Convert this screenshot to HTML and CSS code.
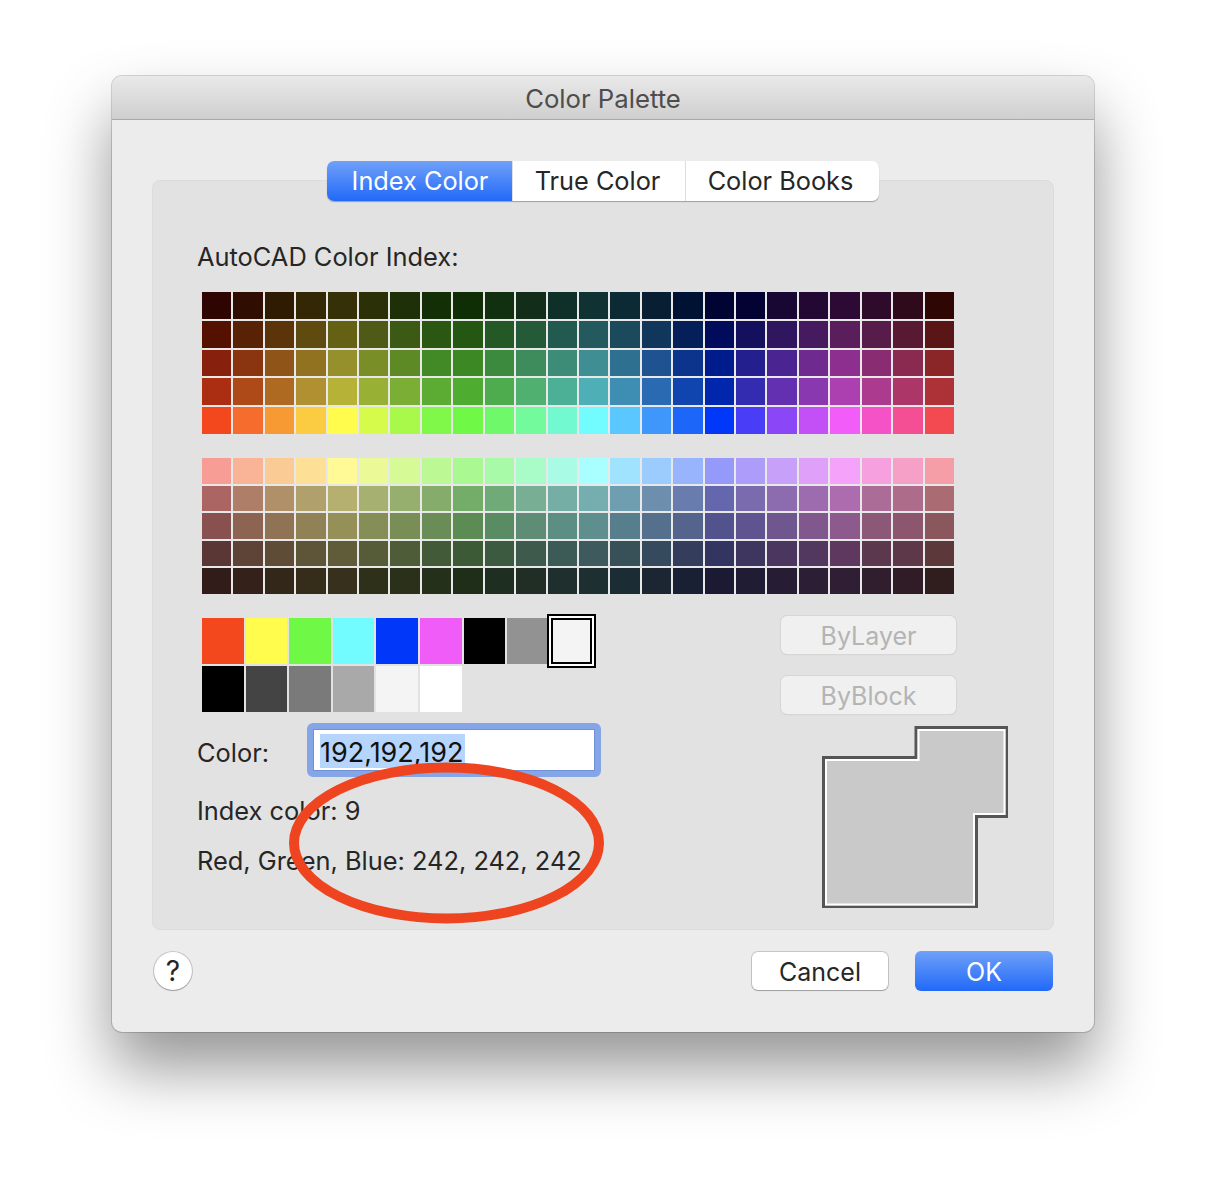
FILE: index.html
```html
<!DOCTYPE html>
<html lang="en">
  <head>
    <meta charset="UTF-8" />
    <meta name="viewport" content="width=device-width, initial-scale=1.0" />
    <title>Color Palette</title>
    <link rel="stylesheet" href="styles.css">
  </head>
  <body>
    <div class="window">
      <div class="titlebar">Color Palette</div>
      <div class="window-body">
        <div class="panel">
          <div class="tabs">
            <div class="tab active">Index Color</div>
            <div class="tab">True Color</div>
            <div class="tab">Color Books</div>
          </div>

          <div class="index-label">AutoCAD Color Index:</div>
          <div class="color-grid" id="gridBright"></div>
          <div class="color-grid pale" id="gridPale"></div>

          <div class="lower">
            <div class="lower-left">
              <div class="swatches">
                <div class="swatch sw-red"></div>
                <div class="swatch sw-yellow"></div>
                <div class="swatch sw-green"></div>
                <div class="swatch sw-cyan"></div>
                <div class="swatch sw-blue"></div>
                <div class="swatch sw-magenta"></div>
                <div class="swatch sw-black"></div>
                <div class="swatch sw-gray"></div>
                <div class="swatch sw-light selected"></div>
                <div class="swatch sw-black"></div>
                <div class="swatch sw-g1"></div>
                <div class="swatch sw-g2"></div>
                <div class="swatch sw-g3"></div>
                <div class="swatch sw-light"></div>
                <div class="swatch sw-white"></div>
              </div>
              <div class="color-row">
                <span class="color-label">Color:</span>
                <div class="color-input"><span class="selection">192,192,192</span></div>
              </div>
              <p class="info">Index color: 9</p>
              <p class="info">Red, Green, Blue: 242, 242, 242</p>
            </div>

            <div class="lower-right">
              <button class="btn-disabled" type="button">ByLayer</button>
              <button class="btn-disabled" type="button">ByBlock</button>
              <svg class="preview" width="186" height="182" viewBox="0 0 186 182">
                <path d="M1.5 181V31.500H94V1.500H185V90.500H154.500V181Z" fill="#c9c9c9" stroke="#555" stroke-width="3" />
                <path d="M4 178.500V34H96.500V4H182.500V88H152V178.500Z" fill="#c9c9c9" stroke="#fff" stroke-width="2" />
              </svg>
            </div>
          </div>
        </div>

        <div class="footer">
          <button class="btn-help" type="button">?</button>
          <div class="footer-actions">
            <button class="btn" type="button">Cancel</button>
            <button class="btn primary" type="button">OK</button>
          </div>
        </div>
      </div>

      <svg class="annotation" width="320" height="164" viewBox="0 0 320 164">
        <ellipse cx="159.500" cy="82" rx="152.500" ry="75.500" fill="none" stroke="#ee4520" stroke-width="10" />
      </svg>
    </div>

    <script src="palette.js"></script>
  </body>
</html>
```

FILE: styles.css
```css
* {
  margin: 0;
  padding: 0;
  box-sizing: border-box;
}

body {
  width: 1206px;
  height: 1180px;
  padding: 76px 112px 0 112px;
  font-family: 'Inter', 'Liberation Sans', sans-serif;
  font-size: 25.400px;
  color: #262626;
  background-color: #fff;
  overflow: hidden;
}

button {
  font-family: inherit;
  font-size: 25px;
  color: inherit;
}

.window {
  position: relative;
  height: 956px;
  border-radius: 10px;
  background-color: #ececec;
  box-shadow: 0 0 0 1px rgba(0, 0, 0, 0.16), 0 36px 64px rgba(0, 0, 0, 0.42);
}

.titlebar {
  height: 44px;
  line-height: 46px;
  font-size: 25.700px;
  text-align: center;
  color: #4d4d4d;
  background: linear-gradient(#e9e9e9, #cfcfcf);
  border-bottom: 1px solid #a9a9a9;
  border-radius: 10px 10px 0 0;
}

.window-body {
  padding: 60px 40px 0;
}

.panel {
  height: 750px;
  padding: 0 45px 0 44px;
  background-color: #e2e2e2;
  border: 1px solid #dcdcdc;
  border-radius: 8px;
}

.tabs {
  display: flex;
  width: 552px;
  height: 40px;
  margin: -20px auto 0;
  font-size: 25.300px;
  background-color: #fff;
  border-radius: 7px;
  box-shadow: 0 1px 1px rgba(0, 0, 0, 0.3);
}

.tab {
  padding-right: 2px;
  line-height: 40px;
  text-align: center;
  border-left: 1px solid #dedede;
}
.tab:nth-child(1) {
  width: 185px;
}
.tab:nth-child(2) {
  width: 173px;
}
.tab:nth-child(3) {
  width: 194px;
  padding-right: 3px;
}
.tab.active {
  padding: 0 0 0 2px;
  color: #fff;
  border-left: none;
  border-radius: 7px 0 0 7px;
  background: linear-gradient(#70a1f9, #2169f8);
}

.index-label {
  height: 30px;
  margin-top: 41px;
  line-height: 30px;
}

.color-grid {
  display: grid;
  grid-template-columns: repeat(24, 1fr);
  grid-template-rows: repeat(5, 1fr);
  gap: 2px;
  width: 752px;
  height: 142px;
  margin: 20px 0 0 5px;
  background-color: #e8e8e8;
}
.color-grid.pale {
  height: 136px;
  margin-top: 24px;
}

.lower {
  display: flex;
  justify-content: space-between;
  margin-top: 20px;
}

.lower-left {
  width: 420px;
}

.swatches {
  display: grid;
  grid-template-columns: repeat(9, 41.600px);
  grid-auto-rows: 46px;
  gap: 2px;
  margin: 4px 0 0 5px;
}

.swatch.selected {
  box-shadow: inset 0 0 0 2px #000, 0 0 0 2px #fff, 0 0 0 4px #000;
}

.sw-red { background-color: #f3481e; }
.sw-yellow { background-color: #fffc4d; }
.sw-green { background-color: #6ff846; }
.sw-cyan { background-color: #72fcff; }
.sw-blue { background-color: #0037f9; }
.sw-magenta { background-color: #f05cf8; }
.sw-black { background-color: #000; }
.sw-gray { background-color: #929292; }
.sw-light { background-color: #f4f4f4; }
.sw-g1 { background-color: #444; }
.sw-g2 { background-color: #7a7a7a; }
.sw-g3 { background-color: #a9a9a9; }
.sw-white { background-color: #fff; }

.color-row {
  display: flex;
  align-items: center;
  margin-top: 11px;
}

.color-label {
  width: 110px;
  padding-top: 5px;
}

.color-input {
  width: 294px;
  height: 54px;
  padding: 5px 0 0 7px;
  font-size: 27px;
  line-height: 38px;
  color: #111;
  background-color: #fff;
  border: 6px solid #85a6e6;
  border-radius: 6px;
  box-shadow: inset 0 0 0 1px #6f8fd8;
}

.selection {
  display: inline-block;
  height: 34px;
  padding-right: 2px;
  background-color: #b5d5fd;
}

.info {
  height: 30px;
  margin-top: 19px;
  line-height: 30px;
  white-space: nowrap;
}
.info + .info {
  padding-top: 1px;
}

.lower-right {
  display: flex;
  flex-direction: column;
  align-items: flex-start;
  width: 228px;
  padding-top: 2px;
}

.btn-disabled {
  width: 175px;
  height: 38px;
  margin: 0 0 22px 1px;
  padding-top: 2px;
  color: #b4b4b4;
  background-color: #f0f0f0;
  border: none;
  border-radius: 6px;
  box-shadow: 0 0 0 1px #d6d6d6, 0 1px 1px rgba(0, 0, 0, 0.12);
}

.preview {
  display: block;
  margin: -10px 0 0 42px;
}

.footer {
  display: flex;
  justify-content: space-between;
  align-items: center;
  padding: 21px 1px 0 0;
}

.footer-actions {
  display: flex;
  align-items: center;
  gap: 27px;
}

.btn-help {
  width: 38px;
  height: 38px;
  margin-left: 2px;
  font-size: 28px;
  background-color: #fff;
  border: none;
  border-radius: 50%;
  box-shadow: 0 0 0 1px rgba(0, 0, 0, 0.16), 0 1px 1px rgba(0, 0, 0, 0.2);
}

.btn {
  width: 136px;
  height: 38px;
  padding-top: 2px;
  background-color: #fff;
  border: none;
  border-radius: 6px;
  box-shadow: 0 0 0 1px rgba(0, 0, 0, 0.16), 0 1px 1px rgba(0, 0, 0, 0.2);
}

.btn.primary {
  width: 138px;
  height: 40px;
  color: #fff;
  background: linear-gradient(#70a1f9, #2169f8);
  box-shadow: none;
}

.annotation {
  position: absolute;
  left: 175px;
  top: 685px;
}
```

FILE: palette.js
```js
// colours of the two index grids, one string per row
const brightRows = [
  '2e0500 2f0d00 2f1a02 332705 353008 2c3007 1e3008 132f06 0f2e05 103010 122e1a 0f3029 113232 0b2a33 071e33 001233 000433 040232 180633 220833 2d0a33 2e0a2b 2e0a1a 2e0604',
  '551100 582206 5c340a 5f4a10 646014 4e5a16 3c5a14 2a5812 245812 245824 255a38 235a50 245a5e 1a4a5c 11365c 052059 000b5b 14105e 2f165e 451a5e 5a1e5c 581c4a 581a32 5a1616',
  '87200c 8a3410 8f5418 907220 96902c 7a8e28 5e8a26 428a26 3c8824 3c8a3e 3e8c5c 3c8c78 3e8e94 2e7090 1e5290 0c348c 001c8c 241f8e 4a2490 6e2a8e 8c2f8e 8a2c72 8a2a50 8a2628',
  'ab2e12 ae4a18 ae6a20 b09030 b6b238 98b034 7aae34 5cac34 4eac30 4eac4e 4fb070 4cb096 4eb0b6 3e8eb4 2a6ab2 1044ae 0026ae 332cb0 6230b0 8a38b0 ac40b0 ac3a8e ac3668 ac3238',
  'f3481e f56c2c f79a34 fbcb42 fffc4d d6fb4b a9f94a 80f84a 6ff846 6ff86a 72fa9c 72f9cf 72fcff 5ac8fe 3f97fc 1c66f9 0037f9 4a3df8 8b46f7 c250f6 f25df9 f452c6 f44e94 f34a52'
];

const paleRows = [
  'f89d95 f9b396 fbcb96 fde096 fffa96 ebfa96 d5fa96 bcf994 a9f892 a8f9a8 a9fbc8 a9fbe6 a9feff 9fe3ff 9ccbfe 98b4fc 9599fa ad9cfa c6a0f9 dfa0f9 f5a3fa f6a0e0 f6a0c8 f69ea8',
  'ab6664 ae7e68 b09068 b0a06c b6b070 a6b070 96ae6e 86ac6c 74ac6a 70aa78 78ae94 74aea4 76aeb0 6e9eb0 6e8eae 687cae 6466ae 7a6aae 8c6cae 9c6cae ac6cae ac6c98 ac6c8a aa6c72',
  '895050 8d6452 907254 908256 949058 868e58 788e56 6a8c56 5c8c54 5a8c64 5e8c74 5c8e84 5e8e8e 567e8c 54708c 54648c 52528c 605490 70568e 80588e 8c5a8c 8c5878 8c566e 8a585c',
  '5a3634 5e4436 5e4c36 5e5438 605c3a 565c38 4e5c38 425a38 3c5a36 3c5a40 3e5a4c 3c5a56 3e5a5c 385058 364a5e 343e5c 343460 3e365e 4a365e 52385e 5e385e 5c384e 5c3848 5c383a',
  '321c1a 33211a 33271a 352c1a 36301c 2f301a 2a301a 24301a 1e2e18 1e2e20 202e26 1e2f2e 1e2f32 1c2c34 1c2632 1a2034 1a1a32 201c34 261c34 2c1e34 301e34 301e2e 301c26 301e1e'
];

function fillGrid(id, rows) {
  const grid = document.getElementById(id);
  rows.forEach((row) => {
    row.split(' ').forEach((hex) => {
      const cell = document.createElement('div');
      cell.style.backgroundColor = '#' + hex;
      grid.appendChild(cell);
    });
  });
}

fillGrid('gridBright', brightRows);
fillGrid('gridPale', paleRows);
```
